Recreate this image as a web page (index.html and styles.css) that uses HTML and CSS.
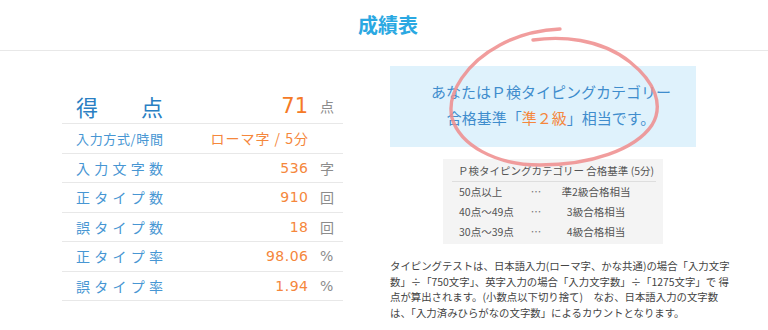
FILE: index.html
```html
<!DOCTYPE html>
<html lang="ja">
<head>
<meta charset="utf-8">
<title>成績表</title>
<link rel="stylesheet" href="styles.css">
</head>
<body>
<header class="head"><h1 class="title">成績表</h1></header>
<main class="main">
  <section class="score">
    <div class="row row-top">
      <span class="label label-big">得点</span>
      <span class="val val-big">71</span>
      <span class="unit">点</span>
    </div>
    <div class="row">
      <span class="label label-tight">入力方式/時間</span>
      <span class="val val-jp">ローマ字 / 5分</span>
      <span class="unit"></span>
    </div>
    <div class="row">
      <span class="label">入力文字数</span>
      <span class="val">536</span>
      <span class="unit">字</span>
    </div>
    <div class="row">
      <span class="label">正タイプ数</span>
      <span class="val">910</span>
      <span class="unit">回</span>
    </div>
    <div class="row">
      <span class="label">誤タイプ数</span>
      <span class="val">18</span>
      <span class="unit">回</span>
    </div>
    <div class="row">
      <span class="label">正タイプ率</span>
      <span class="val">98.06</span>
      <span class="unit unit-pct">%</span>
    </div>
    <div class="row">
      <span class="label">誤タイプ率</span>
      <span class="val">1.94</span>
      <span class="unit unit-pct">%</span>
    </div>
  </section>
  <section class="result">
    <div class="verdict">
      <p>あなたはＰ検タイピングカテゴリー</p>
      <p>合格基準「<span class="grade">準２級</span>」相当です。</p>
    </div>
    <div class="criteria">
      <div class="crit-head">Ｐ検タイピングカテゴリー 合格基準 (5分)</div>
      <div class="crit-row"><span>50点以上</span><span class="dots">…</span><span class="c3">準2級合格相当</span></div>
      <div class="crit-row"><span>40点～49点</span><span class="dots">…</span><span class="c3">3級合格相当</span></div>
      <div class="crit-row"><span>30点～39点</span><span class="dots">…</span><span class="c3">4級合格相当</span></div>
    </div>
    <p class="note">タイピングテストは、日本語入力(ローマ字、かな共通)の場合「入力文字<br>数」÷「750文字」、英字入力の場合「入力文字数」÷「1275文字」で 得<br>点が算出されます。(小数点以下切り捨て)　なお、日本語入力の文字数<br>は、「入力済みひらがなの文字数」によるカウントとなります。</p>
  </section>
</main>
<svg class="circle" width="768" height="330" viewBox="0 0 768 330" aria-hidden="true">
  <path d="M533,40 C560,36 600,38 630,62 C655,82 664,105 652,125 C635,150 590,165 540,165 C495,165 460,145 452,118 C446,92 468,62 500,45 C520,34 540,30 560,29" fill="none" stroke="#ee8c8c" stroke-opacity="0.85" stroke-width="3.4" stroke-linecap="round"/>
</svg>
</body>
</html>
```
FILE: styles.css
```css
* { box-sizing: border-box; }
html, body { margin: 0; padding: 0; }
body {
  width: 768px;
  height: 330px;
  overflow: hidden;
  background: #fff;
  font-family: "Noto Sans CJK JP", "Noto Sans", sans-serif;
  position: relative;
}
p { margin: 0; }
.head {
  height: 51px;
  border-bottom: 1px solid #e8e8e8;
  display: flex;
  align-items: center;
  justify-content: center;
}
.title {
  margin: 0 0 0 8px;
  font-size: 20px;
  font-weight: 700;
  color: #2aa8e2;
  line-height: 1;
}
.main {
  display: flex;
  align-items: flex-start;
}
.score {
  margin-left: 62px;
  margin-top: 38px;
  width: 281px;
}
.row {
  display: grid;
  grid-template-columns: 87px 1fr 23px;
  column-gap: 12px;
  align-items: center;
  padding-left: 14px;
  height: 29.5px;
  border-bottom: 1px solid #e8e8e8;
}
.row-top { height: 35px; }
.label {
  display: block;
  width: 87px;
  white-space: nowrap;
  text-align: justify;
  text-align-last: justify;
  font-size: 14px;
  color: #4796d3;
  line-height: 1;
}
.label-tight { font-size: 13px; }
.label-big {
  font-size: 22px;
  color: #2a7fc3;
}
.val {
  text-align: right;
  white-space: nowrap;
  font-family: "DejaVu Sans", sans-serif;
  font-size: 14px;
  letter-spacing: 0.5px;
  color: #f5873c;
  line-height: 1;
  margin-right: -0.5px;
}
.val-big {
  font-size: 21px;
  letter-spacing: 0;
  color: #f57a26;
  margin-right: 0;
}
.val-jp {
  font-family: "Noto Sans CJK JP", sans-serif;
  font-size: 14px;
  letter-spacing: 1px;
  margin-right: -1px;
}
.unit {
  font-size: 14px;
  color: #8c8c8c;
  line-height: 1;
}
.unit-pct { font-family: "DejaVu Sans", sans-serif; }
.result {
  margin-left: 47px;
  width: 340px;
}
.verdict {
  margin-top: 15px;
  width: 306px;
  height: 81px;
  background: #dff2fc;
  padding: 13px 0 0 16px;
  text-align: center;
  font-size: 15px;
  line-height: 26px;
  color: #3f8dcd;
}
.grade { color: #f5873c; }
.criteria {
  margin-top: 12px;
  margin-left: 53px;
  width: 220px;
  height: 85px;
  background: #f4f4f4;
  padding-top: 5px;
  font-size: 10.5px;
  color: #555;
  white-space: nowrap;
}
.crit-head {
  line-height: 14px;
  padding-bottom: 3px;
  margin: 0 7px 0 9px;
  padding-left: 6px;
  border-bottom: 1px solid #dedede;
}
.crit-row {
  display: grid;
  grid-template-columns: 62px 30px 90px;
  padding-left: 16px;
  line-height: 20px;
}
.dots { text-align: center; color: #777; }
.c3 { text-align: center; }
.note {
  margin-top: 14px;
  font-size: 10.4px;
  line-height: 15.5px;
  color: #444;
  white-space: nowrap;
}
.circle {
  position: absolute;
  left: 0;
  top: 0;
  pointer-events: none;
}
```
